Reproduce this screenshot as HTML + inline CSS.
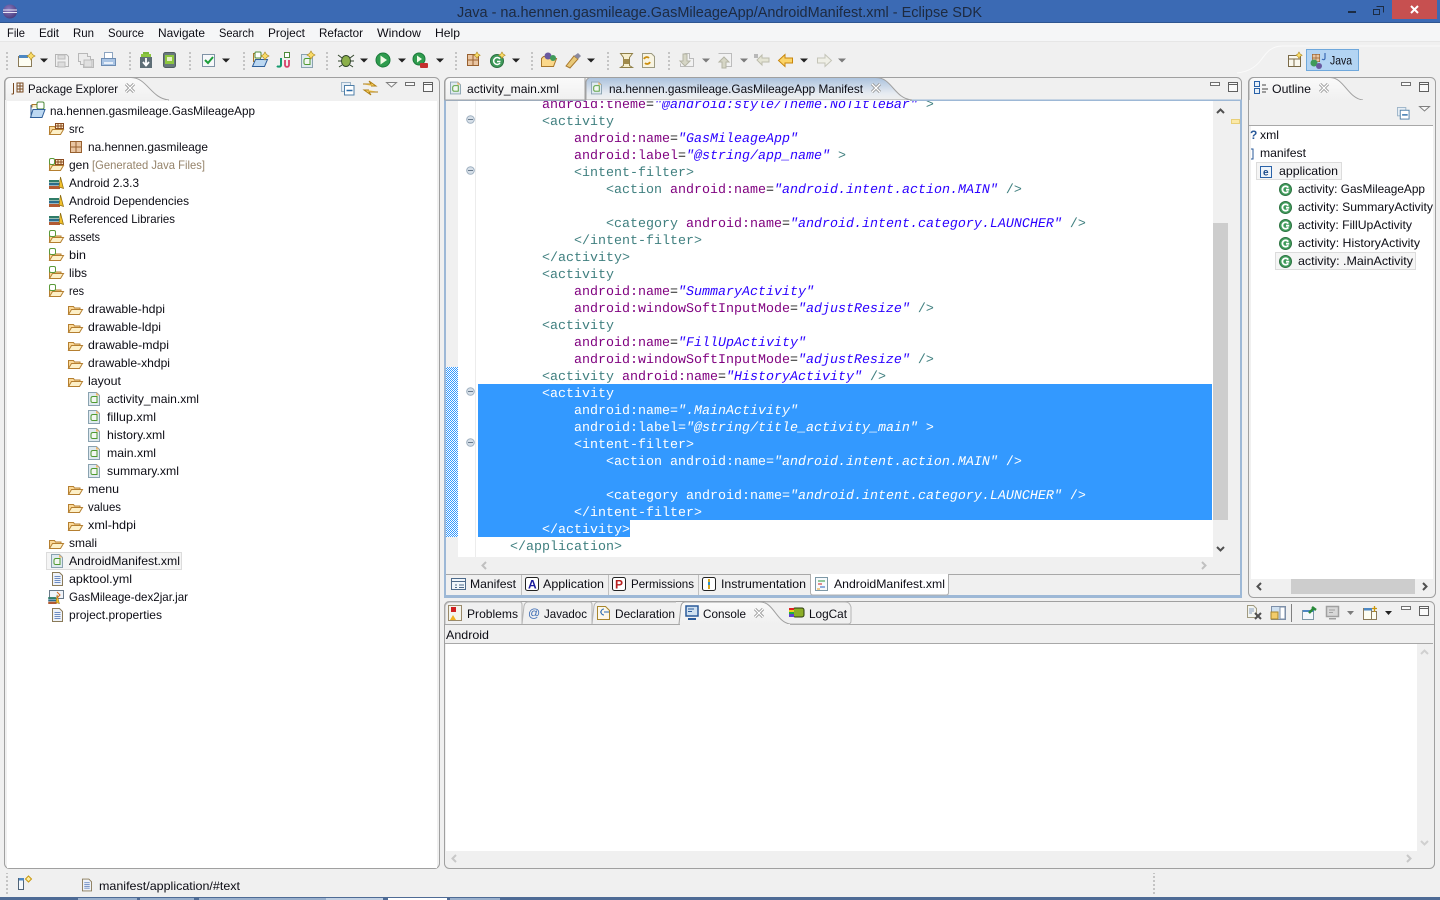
<!DOCTYPE html>
<html><head><meta charset="utf-8"><title>Eclipse SDK</title>
<style>
html,body{margin:0;padding:0;width:1440px;height:900px;overflow:hidden;background:#f0f0f0}
svg{display:block}
text{font-family:"Liberation Sans",sans-serif;font-size:12px;fill:#0c0c14}
.c text,text.c{font-family:"Liberation Mono",monospace;font-size:13.33px;fill:#3f7f7f;white-space:pre;text-rendering:geometricPrecision}
.a{fill:#7f007f}.s{fill:#2a00ff;font-style:italic}
.w text,.w tspan{fill:#fff}
</style></head><body>
<svg width="1440" height="900" viewBox="0 0 1440 900" xmlns="http://www.w3.org/2000/svg">
<defs>
<pattern id="hatch" width="2" height="2" patternUnits="userSpaceOnUse"><rect width="2" height="2" fill="#fff"/><rect width="1" height="1" fill="#3399ff"/><rect x="1" y="1" width="1" height="1" fill="#3399ff"/></pattern>
<pattern id="grip" width="2" height="4" patternUnits="userSpaceOnUse"><rect width="2" height="2" fill="#c4c4c4"/></pattern>
<linearGradient id="act" x1="0" y1="0" x2="0" y2="1"><stop offset="0" stop-color="#a9c1dc"/><stop offset=".7" stop-color="#e6ebf1"/><stop offset="1" stop-color="#f0f0f0"/></linearGradient>
<linearGradient id="inact" x1="0" y1="0" x2="0" y2="1"><stop offset="0" stop-color="#fafafa"/><stop offset="1" stop-color="#f0f0f0"/></linearGradient>
<clipPath id="ed"><rect x="446" y="101" width="767" height="456"/></clipPath>
<symbol id="fold" viewBox="0 0 15 10" overflow="visible"><path d="M.5 9V1.500h5l1 1.500h5.500v2" fill="#fbd998" stroke="#b57f30"/><path d="M.5 9.500l3-5h11l-3 5z" fill="#fdf0c8" stroke="#b57f30"/></symbol>
<symbol id="gfold" viewBox="0 0 15 13" overflow="visible"><g transform="translate(0,3)"><path d="M.5 9V1.500h5l1 1.500h5.500v2" fill="#fbd998" stroke="#b57f30"/><path d="M.5 9.500l3-5h11l-3 5z" fill="#fdf0c8" stroke="#b57f30"/></g><rect x=".5" y=".5" width="6" height="6" rx="1.500" fill="#fff" stroke="#5a9a3a"/></symbol>
<symbol id="sfold" viewBox="0 0 15 12" overflow="visible"><g transform="translate(0,2)"><path d="M.5 9V1.500h5l1 1.500h5.500v2" fill="#fbd998" stroke="#b57f30"/><path d="M.5 9.500l3-5h11l-3 5z" fill="#fdf0c8" stroke="#b57f30"/></g><path d="M6.500.5h8v5h-8zM9 .5v5M12 .5v5M6.500 3h8" fill="#fbe8c4" stroke="#8a4b20"/></symbol>
<symbol id="xml" viewBox="0 0 12 14" overflow="visible"><path d="M.5.5h8l3 3v10H.5z" fill="#dfeaf0" stroke="#8aa2b0"/><path d="M8 .5l3.500 3H8z" fill="#f0b870"/><path d="M9 4.500H5C3.800 4.500 3 5.300 3 6.500V9C3 10 3.800 10.500 5 10.500H9z" fill="#f2f7f2" stroke="#4f9a2f"/></symbol>
<symbol id="doc" viewBox="0 0 11 14" overflow="visible"><path d="M.5.5h7l3 3v10H.5z" fill="#eef2f8" stroke="#8a7a58"/><path d="M2.500 4.500h6M2.500 6.500h6M2.500 8.500h6M2.500 10.500h6" stroke="#6d8cc2"/></symbol>
<symbol id="lib" viewBox="0 0 15 13" overflow="visible"><path d="M0 4h10v2.500H0z" fill="#2f7c68"/><path d="M0 7h11v2.500H0z" fill="#2a6c8c"/><path d="M0 10h11v3H0z" fill="#b25a33"/><path d="M10 11L11.500 1l3 11.500z" fill="#f2c02a" stroke="#8a6a10" stroke-width=".7"/></symbol>
<symbol id="pkg" viewBox="0 0 12 12" overflow="visible"><rect x=".5" y=".5" width="11" height="11" fill="#e9c5a2" stroke="#97602f"/><path d="M6 0v12M0 6h12" stroke="#97602f"/></symbol>
<symbol id="G" viewBox="0 0 14 14" overflow="visible"><circle cx="7" cy="7" r="6.500" fill="#3f9a5a" stroke="#2c7040"/><path d="M10 5A3.500 3.500 0 1 0 10 9M7.500 7.200H11" fill="none" stroke="#fff" stroke-width="2"/></symbol>
<symbol id="min" viewBox="0 0 28 10" overflow="visible"><rect x=".5" y=".5" width="9" height="3" fill="#fafafa" stroke="#707070"/><rect x="18.500" y=".5" width="9" height="9" fill="#fafafa" stroke="#606060"/><path d="M18.500 2.500h9" stroke="#606060"/></symbol>
<symbol id="coll" viewBox="0 0 14 14" overflow="visible"><rect x=".5" y=".5" width="9" height="9" fill="#e6eef5" stroke="#9db4c8"/><rect x="3.500" y="3.500" width="9.500" height="9.500" fill="#fff" stroke="#4f7fa8"/><path d="M5.500 8.500h6" stroke="#2a6ca8" stroke-width="1.500"/></symbol>
<symbol id="x" viewBox="0 0 10 10" overflow="visible"><path d="M1 1l8 8M9 1L1 9" stroke="#8e8e8e" stroke-width="3"/><path d="M1 1l8 8M9 1L1 9" stroke="#fff" stroke-width="1.300"/></symbol>
<radialGradient id="ecl" cx=".4" cy=".35" r=".8"><stop offset="0" stop-color="#8a7ac0"/><stop offset="1" stop-color="#3f3272"/></radialGradient>
</defs>

<!-- window chrome -->
<rect width="1440" height="900" fill="#f0f0f0"/>
<rect width="1440" height="22" fill="#3b6ab4"/><rect y="22" width="1440" height="1" fill="#2e5590"/>
<rect y="23" width="1440" height="18" fill="#f5f6f7"/><rect y="41" width="1440" height="1" fill="#e6e6e6"/>
<circle cx="10" cy="11.500" r="7" fill="url(#ecl)"/><path d="M3 10h14M3 12.500h14" stroke="#e8e6f6" stroke-width="1"/>
<text x="457" y="17" style="font-size:15px;fill:#1d2a40" textLength="525" lengthAdjust="spacingAndGlyphs">Java - na.hennen.gasmileage.GasMileageApp/AndroidManifest.xml - Eclipse SDK</text>
<rect x="1348" y="11" width="8" height="2" fill="#1c2c44"/>
<path d="M1376.500 6.500h7v6" fill="none" stroke="#1c2c44"/>
<path d="M1373.500 9.500h6v5h-6z" fill="#3b6ab4" stroke="#1c2c44"/>
<rect x="1392" y="0" width="45" height="19" fill="#c75050"/>
<path d="M1411 6l7 7M1418 6l-7 7" stroke="#fff" stroke-width="2"/>
<g>
<text x="7" y="37" textLength="18" lengthAdjust="spacingAndGlyphs">File</text>
<text x="39" y="37" textLength="20" lengthAdjust="spacingAndGlyphs">Edit</text>
<text x="73" y="37" textLength="21" lengthAdjust="spacingAndGlyphs">Run</text>
<text x="108" y="37" textLength="36" lengthAdjust="spacingAndGlyphs">Source</text>
<text x="158" y="37" textLength="47" lengthAdjust="spacingAndGlyphs">Navigate</text>
<text x="219" y="37" textLength="35" lengthAdjust="spacingAndGlyphs">Search</text>
<text x="268" y="37" textLength="37" lengthAdjust="spacingAndGlyphs">Project</text>
<text x="319" y="37" textLength="44" lengthAdjust="spacingAndGlyphs">Refactor</text>
<text x="377" y="37" textLength="44" lengthAdjust="spacingAndGlyphs">Window</text>
<text x="435" y="37" textLength="25" lengthAdjust="spacingAndGlyphs">Help</text>
</g>

<!-- toolbar grips -->
<g fill="url(#grip)">
<rect x="6" y="50" width="2" height="22"/><rect x="129" y="50" width="2" height="22"/><rect x="189" y="50" width="2" height="22"/><rect x="243" y="50" width="2" height="22"/><rect x="326" y="50" width="2" height="22"/><rect x="455" y="50" width="2" height="22"/><rect x="531" y="50" width="2" height="22"/><rect x="607" y="50" width="2" height="22"/><rect x="668" y="50" width="2" height="22"/>
</g>
<!-- toolbar icons -->
<path d="M18.500 56.500h13v10h-13z" fill="#fdfdf2" stroke="#8a7a58"/><rect x="19" y="55" width="9" height="3" fill="#4d88c4"/><path d="M31 52l1.500 2.500L35 56l-2.500 1.500L31 60l-1.500-2.500L27 56l2.500-1.500z" fill="#f9dc6a" stroke="#b08a20" stroke-width=".7"/>
<path d="M40 58.500h8l-4 4z" fill="#222"/>
<path d="M55.500 54.500h11l2 2v10h-13z" fill="#f0f0f0" stroke="#b4b4b4"/><rect x="58" y="55" width="7" height="4" fill="#ddd" stroke="#bbb"/><rect x="58" y="62" width="7" height="5" fill="#ddd" stroke="#bbb"/>
<path d="M78.500 53.500h9v3h3v3h3v8h-10v-3h-3v-3h-2z" fill="#ececec" stroke="#b8b8b8"/><rect x="84" y="60" width="8" height="7" fill="#e0e0e0" stroke="#bbb"/>
<path d="M104.500 52.500h8v6h-8z" fill="#fff" stroke="#8ca4c0"/><path d="M101.500 58.500h14v7h-14z" fill="#a9c4e4" stroke="#6d8cb2"/><rect x="104" y="62" width="9" height="2" fill="#e8f0fa"/>
<path d="M143 52h6v2h-6z" fill="#7ab83a"/><path d="M141 54h10v3h-10z" fill="#8cc63f"/><rect x="140" y="57" width="12" height="11" fill="#5e6e76"/><path d="M146 58v6M143 62l3 3.500 3-3.500" stroke="#fff" stroke-width="1.800" fill="none"/>
<rect x="163.500" y="52.500" width="12" height="15" rx="2" fill="#68787c" stroke="#4f5c60"/><rect x="165" y="55" width="9" height="9" fill="#8cc63f"/><path d="M167 57h5v4h-5z" fill="#e6f0c8"/>
<rect x="202.500" y="54.500" width="12" height="12" fill="#f6f8fa" stroke="#7f93a6"/><path d="M205 60l3 3 5-6" stroke="#1d9e3a" stroke-width="2" fill="none"/>
<path d="M222 58.500h8l-4 4z" fill="#222"/>
<path d="M253.500 53.500h7v8h-7z" fill="#fbeec8" stroke="#a8772c"/><rect x="255" y="52" width="6" height="6" rx="1" fill="#fff" stroke="#4d8a3a"/><path d="M252.500 66.500l3-7h12l-3 7z" fill="#bcd8f2" stroke="#2f5f9a"/><path d="M265 52l1.500 2.500 2.500 1.500-2.500 1.500-1.500 2.500-1.500-2.500-2.500-1.500 2.500-1.500z" fill="#f9dc6a" stroke="#b08a20" stroke-width=".7"/>
<path d="M281 58v7c0 2-3 2-4 1" stroke="#159a6e" stroke-width="2" fill="none"/><path d="M285 60v5c0 2.500 4 2.500 4 0v-5" stroke="#d8406a" stroke-width="1.800" fill="none"/><rect x="284.500" y="52.500" width="5" height="5" fill="#fff" stroke="#4d8a3a"/>
<use href="#xml" x="301" y="54" width="12" height="14"/><path d="M311 51l1.500 2.500 2.500 1.500-2.500 1.500-1.500 2.500-1.500-2.500-2.500-1.500 2.500-1.500z" fill="#f9dc6a" stroke="#b08a20" stroke-width=".7"/>
<ellipse cx="346" cy="61" rx="4.500" ry="5.500" fill="#8cb04a" stroke="#31452a"/><path d="M338 55l4 3M354 55l-4 3M338 61h4M354 61h-4M339 67l3-2M353 67l-3-2" stroke="#31452a"/>
<path d="M360 58.500h8l-4 4z" fill="#222"/>
<circle cx="383" cy="60" r="7" fill="#2f9c4e" stroke="#1b7a3a"/><path d="M380.500 55.500l6.500 4.500-6.500 4.500z" fill="#f0fbe6"/>
<path d="M398 58.500h8l-4 4z" fill="#222"/>
<circle cx="419" cy="59" r="6" fill="#2f9c4e" stroke="#1b7a3a"/><path d="M417 55.500l5 3.500-5 3.500z" fill="#f0fbe6"/><rect x="420" y="63" width="8" height="5" rx="1" fill="#c42f2f"/>
<path d="M436 58.500h8l-4 4z" fill="#222"/>
<use href="#pkg" x="467" y="54" width="12" height="12"/><path d="M477 52l1.200 2 2 1.200-2 1.200-1.200 2-1.200-2-2-1.200 2-1.200z" fill="#f9dc6a" stroke="#b08a20" stroke-width=".6"/>
<circle cx="497" cy="61" r="6.500" fill="#3f9a5a" stroke="#2c7040"/><path d="M500 59a3.500 3.500 0 1 0 0 4M497 61.500h3.500" fill="none" stroke="#fff" stroke-width="1.500"/><path d="M502 52l1.200 2 2 1.200-2 1.200-1.200 2-1.200-2-2-1.200 2-1.200z" fill="#f9dc6a" stroke="#b08a20" stroke-width=".6"/>
<path d="M512 58.500h8l-4 4z" fill="#222"/>
<path d="M541.500 66.500v-8l2-2h5v2h8l-3 8z" fill="#fbd88a" stroke="#a8772c"/><circle cx="548" cy="56" r="3.500" fill="#6a5aa0"/><circle cx="553" cy="58" r="3" fill="#3f9a5a"/>
<path d="M566 66l8-10 4 3-8 9z" fill="#e8c878" stroke="#a8772c"/><path d="M574 56l4-3 3 3-3 3z" fill="#8a8aa0"/>
<path d="M587 58.500h8l-4 4z" fill="#222"/>
<path d="M620.500 53.500h12l-3 4v8l3 2h-12l3-2v-8z" fill="#f6eecc" stroke="#8f7f48"/><rect x="623" y="59" width="6" height="5" fill="#a08a4a"/>
<path d="M642.500 53.500h9l3 3v11h-12z" fill="#f8f4e2" stroke="#9c9a80"/><path d="M644 59a3 3 0 0 1 5-1M650 62a3 3 0 0 1-5 1" stroke="#cc8f10" fill="none" stroke-width="1.800"/>
<path d="M684.500 53.500h5v5h4v8h-13v-3" fill="#f2f2f2" stroke="#bcbcbc"/><path d="M683 54v7h-3l5 5 5-5h-3v-7z" fill="#d6d6c6" stroke="#b4b4a4"/>
<path d="M702 58.500h8l-4 4z" fill="#7c7c7c"/>
<path d="M718.500 53.500h13v13h-5" fill="#f2f2f2" stroke="#bcbcbc"/><path d="M724 57l5 5h-3v6h-4v-6h-3z" fill="#d6d6c6" stroke="#b4b4a4"/>
<path d="M740 58.500h8l-4 4z" fill="#7c7c7c"/>
<path d="M762 55l-5 5 5 5v-3h7v-4h-7z" fill="#e4e4d4" stroke="#bcbcac"/><rect x="754" y="54" width="4" height="4" fill="#b8b8b8"/>
<path d="M785 54.500l-6.500 6 6.500 6v-3.500h7.500v-5H785z" fill="#fbd468" stroke="#c8860c" stroke-width="1"/>
<path d="M800 58.500h8l-4 4z" fill="#222"/>
<path d="M825 54.500l6.500 6-6.500 6v-3.500h-7.500v-5H825z" fill="#efefe6" stroke="#c4c4b8"/>
<path d="M838 58.500h8l-4 4z" fill="#7c7c7c"/>

<!-- perspective area -->
<path d="M1237 73c10-1 18-5 24-13 6-8 10-14 22-14H1440" fill="none" stroke="#fafafa" stroke-width="1"/>
<rect x="1288.500" y="55.500" width="12" height="11" fill="#faf8ee" stroke="#7a6a48"/><path d="M1288 59h12M1294 59v8" stroke="#7a6a48"/><path d="M1299 52l1.200 2 2 1.200-2 1.200-1.200 2-1.200-2-2-1.200 2-1.200z" fill="#f9dc6a" stroke="#b08a20" stroke-width=".6"/>
<rect x="1306.500" y="49.500" width="52" height="21" fill="#b3d4f3" stroke="#6fa8dc"/>
<use href="#pkg" x="1312" y="54" width="8" height="8"/><circle cx="1314" cy="63" r="3.500" fill="#3f9a5a"/><circle cx="1319" cy="66" r="3" fill="#6a5aa0"/><path d="M1325 53v5c0 2-2 2-3 1" stroke="#3a6ab4" fill="none" stroke-width="1.200"/>
<text x="1330" y="64.500" textLength="22" lengthAdjust="spacingAndGlyphs">Java</text>

<!-- Package Explorer panel -->
<rect x="4.500" y="77.500" width="435" height="791" rx="5" fill="#f0f0f0" stroke="#a0a0a0"/>
<rect x="7" y="101" width="430" height="767" fill="#fff"/>
<path d="M5 100.500V82a5 5 0 0 1 5-4.500h121c16 0 20 21 38 22.500" fill="url(#inact)" stroke="#a0a0a0"/>
<path d="M5 100h163V101H5z" fill="#f0f0f0"/>
<path d="M13.500 83v11M13.500 94h-2M17 83h6v3h-6zM17 86h6v3h-6zM17 89h6v3h-6zM20 83v9" stroke="#7a4a20" fill="none"/>
<text x="28" y="93" textLength="90" lengthAdjust="spacingAndGlyphs">Package Explorer</text>
<use href="#x" x="125" y="83" width="10" height="10"/>
<use href="#coll" x="341" y="82" width="14" height="14"/>
<path d="M363 84h8l-2-3 7 5-5 0M378 92h-9l2 3-7-5 5 0" fill="#fbd468" stroke="#b08016"/>
<path d="M386.500 82.500h10l-5 4.500z" fill="#f8f8f8" stroke="#808080"/>
<use href="#min" x="405" y="82" width="28" height="10"/>

<!-- tree -->
<path d="M32 107.500v-3h8v3" fill="#fbeec8" stroke="#a8772c"/><rect x="37" y="102" width="7" height="7" rx="1.500" fill="#fff" stroke="#4d8a3a"/><path d="M30.500 117.500l2.500-8h12l-3 8z" fill="#bcd8f2" stroke="#2f5f9a"/><path d="M31 117v-12" stroke="#2f5f9a"/>
<g>
<text x="50" y="115" textLength="205" lengthAdjust="spacingAndGlyphs">na.hennen.gasmileage.GasMileageApp</text>
<text x="69" y="133" textLength="15" lengthAdjust="spacingAndGlyphs">src</text>
<text x="88" y="151" textLength="120" lengthAdjust="spacingAndGlyphs">na.hennen.gasmileage</text>
<text x="69" y="169" textLength="20" lengthAdjust="spacingAndGlyphs">gen</text>
<text x="92" y="169" textLength="113" lengthAdjust="spacingAndGlyphs" style="fill:#95836a">[Generated Java Files]</text>
<text x="69" y="187" textLength="70" lengthAdjust="spacingAndGlyphs">Android 2.3.3</text>
<text x="69" y="205" textLength="120" lengthAdjust="spacingAndGlyphs">Android Dependencies</text>
<text x="69" y="223" textLength="106" lengthAdjust="spacingAndGlyphs">Referenced Libraries</text>
<text x="69" y="241" textLength="31" lengthAdjust="spacingAndGlyphs">assets</text>
<text x="69" y="259" textLength="17" lengthAdjust="spacingAndGlyphs">bin</text>
<text x="69" y="277" textLength="18" lengthAdjust="spacingAndGlyphs">libs</text>
<text x="69" y="295" textLength="15" lengthAdjust="spacingAndGlyphs">res</text>
<text x="88" y="313" textLength="77" lengthAdjust="spacingAndGlyphs">drawable-hdpi</text>
<text x="88" y="331" textLength="73" lengthAdjust="spacingAndGlyphs">drawable-ldpi</text>
<text x="88" y="349" textLength="81" lengthAdjust="spacingAndGlyphs">drawable-mdpi</text>
<text x="88" y="367" textLength="82" lengthAdjust="spacingAndGlyphs">drawable-xhdpi</text>
<text x="88" y="385" textLength="33" lengthAdjust="spacingAndGlyphs">layout</text>
<text x="107" y="403" textLength="92" lengthAdjust="spacingAndGlyphs">activity_main.xml</text>
<text x="107" y="421" textLength="49" lengthAdjust="spacingAndGlyphs">fillup.xml</text>
<text x="107" y="439" textLength="58" lengthAdjust="spacingAndGlyphs">history.xml</text>
<text x="107" y="457" textLength="49" lengthAdjust="spacingAndGlyphs">main.xml</text>
<text x="107" y="475" textLength="72" lengthAdjust="spacingAndGlyphs">summary.xml</text>
<text x="88" y="493" textLength="31" lengthAdjust="spacingAndGlyphs">menu</text>
<text x="88" y="511" textLength="33" lengthAdjust="spacingAndGlyphs">values</text>
<text x="88" y="529" textLength="48" lengthAdjust="spacingAndGlyphs">xml-hdpi</text>
<text x="69" y="547" textLength="28" lengthAdjust="spacingAndGlyphs">smali</text>
<rect x="46.500" y="552.500" width="135" height="17" fill="#f5f5f5" stroke="#dcdcdc"/>
<text x="69" y="565" textLength="111" lengthAdjust="spacingAndGlyphs">AndroidManifest.xml</text>
<text x="69" y="583" textLength="63" lengthAdjust="spacingAndGlyphs">apktool.yml</text>
<text x="69" y="601" textLength="119" lengthAdjust="spacingAndGlyphs">GasMileage-dex2jar.jar</text>
<text x="69" y="619" textLength="93" lengthAdjust="spacingAndGlyphs">project.properties</text>
</g>
<use href="#sfold" x="49" y="123" width="15" height="12"/>
<use href="#pkg" x="70" y="141" width="12" height="12"/>
<use href="#sfold" x="49" y="159" width="15" height="12"/><rect x="49.500" y="158.500" width="5" height="6" rx="1.500" fill="#fff" stroke="#5a9a3a"/>
<use href="#lib" x="49" y="176" width="15" height="13"/><use href="#lib" x="49" y="194" width="15" height="13"/><use href="#lib" x="49" y="212" width="15" height="13"/>
<use href="#gfold" x="49" y="230" width="15" height="13"/><use href="#gfold" x="49" y="248" width="15" height="13"/><use href="#gfold" x="49" y="266" width="15" height="13"/><use href="#gfold" x="49" y="284" width="15" height="13"/>
<use href="#fold" x="68" y="305" width="15" height="10"/><use href="#fold" x="68" y="323" width="15" height="10"/><use href="#fold" x="68" y="341" width="15" height="10"/><use href="#fold" x="68" y="359" width="15" height="10"/><use href="#fold" x="68" y="377" width="15" height="10"/>
<use href="#xml" x="88" y="392" width="12" height="14"/><use href="#xml" x="88" y="410" width="12" height="14"/><use href="#xml" x="88" y="428" width="12" height="14"/><use href="#xml" x="88" y="446" width="12" height="14"/><use href="#xml" x="88" y="464" width="12" height="14"/>
<use href="#fold" x="68" y="485" width="15" height="10"/><use href="#fold" x="68" y="503" width="15" height="10"/><use href="#fold" x="68" y="521" width="15" height="10"/><use href="#fold" x="49" y="539" width="15" height="10"/>
<use href="#xml" x="51" y="554" width="12" height="14"/>
<use href="#doc" x="52" y="572" width="11" height="14"/>
<path d="M49.500 590.500h10l4 0v8h-14z" fill="#f0f4fa" stroke="#6a7a8a"/><use href="#lib" x="48" y="594" width="12" height="10"/><path d="M57 592l3 3-3 3" stroke="#d8681a" fill="none"/>
<use href="#doc" x="52" y="608" width="11" height="14"/>

<!-- Editor panel -->
<rect x="444.500" y="77.500" width="797" height="520" rx="5" fill="#f0f0f0" stroke="#a0a0a0"/>
<rect x="444" y="100" width="2" height="498" fill="#9db8d6"/><rect x="1240" y="100" width="2" height="498" fill="#9db8d6"/><rect x="444" y="595" width="798" height="3" fill="#9db8d6"/>
<rect x="444" y="99.500" width="798" height="1.500" fill="#9db8d6"/>
<path d="M445 100V82a5 5 0 0 1 5-4.500h135V100z" fill="url(#inact)" stroke="#a0a0a0"/>
<path d="M586 100V83a5 5 0 0 1 6-5.500h284c16 0 18 21 36 22.500H586z" fill="url(#act)" stroke="#a0a0a0"/>
<path d="M586 100h324v1H586z" fill="#f6f8fb"/>
<use href="#xml" x="450" y="81" width="11" height="14"/>
<text x="467" y="93" textLength="92" lengthAdjust="spacingAndGlyphs">activity_main.xml</text>
<use href="#xml" x="591" y="81" width="11" height="14"/>
<text x="609" y="93" textLength="254" lengthAdjust="spacingAndGlyphs">na.hennen.gasmileage.GasMileageApp Manifest</text>
<use href="#x" x="871" y="83" width="10" height="10"/>
<use href="#min" x="1210" y="82" width="28" height="10"/>

<rect x="446" y="101" width="767" height="456" fill="#fff"/>
<rect x="446" y="101" width="12" height="456" fill="#f0f0f0"/>
<rect x="475" y="101" width="1" height="456" fill="#ececec"/>
<rect x="446" y="367" width="12" height="170" fill="url(#hatch)"/>
<g fill="#d6dfe8" stroke="#9fb0c0"><circle cx="470.500" cy="119.500" r="3.800"/><circle cx="470.500" cy="170.500" r="3.800"/><circle cx="470.500" cy="391.500" r="3.800"/><circle cx="470.500" cy="442.500" r="3.800"/></g>
<path d="M468 119.500h5M468 170.500h5M468 391.500h5M468 442.500h5" stroke="#687a8c"/>
<rect x="478" y="384" width="734" height="136" fill="#3399ff"/><rect x="478" y="520" width="152" height="17" fill="#3399ff"/>
<g class="c" clip-path="url(#ed)">
<text x="542" y="108"><tspan class="a">android:theme</tspan><tspan style="fill:#222">=</tspan><tspan class="s">"@android:style/Theme.NoTitleBar"</tspan> &gt;</text>
<text x="542" y="125">&lt;activity</text>
<text x="574" y="142"><tspan class="a">android:name</tspan><tspan style="fill:#222">=</tspan><tspan class="s">"GasMileageApp"</tspan></text>
<text x="574" y="159"><tspan class="a">android:label</tspan><tspan style="fill:#222">=</tspan><tspan class="s">"@string/app_name"</tspan> &gt;</text>
<text x="574" y="176">&lt;intent-filter&gt;</text>
<text x="606" y="193">&lt;action <tspan class="a">android:name</tspan><tspan style="fill:#222">=</tspan><tspan class="s">"android.intent.action.MAIN"</tspan> /&gt;</text>
<text x="606" y="227">&lt;category <tspan class="a">android:name</tspan><tspan style="fill:#222">=</tspan><tspan class="s">"android.intent.category.LAUNCHER"</tspan> /&gt;</text>
<text x="574" y="244">&lt;/intent-filter&gt;</text>
<text x="542" y="261">&lt;/activity&gt;</text>
<text x="542" y="278">&lt;activity</text>
<text x="574" y="295"><tspan class="a">android:name</tspan><tspan style="fill:#222">=</tspan><tspan class="s">"SummaryActivity"</tspan></text>
<text x="574" y="312"><tspan class="a">android:windowSoftInputMode</tspan><tspan style="fill:#222">=</tspan><tspan class="s">"adjustResize"</tspan> /&gt;</text>
<text x="542" y="329">&lt;activity</text>
<text x="574" y="346"><tspan class="a">android:name</tspan><tspan style="fill:#222">=</tspan><tspan class="s">"FillUpActivity"</tspan></text>
<text x="574" y="363"><tspan class="a">android:windowSoftInputMode</tspan><tspan style="fill:#222">=</tspan><tspan class="s">"adjustResize"</tspan> /&gt;</text>
<text x="542" y="380">&lt;activity <tspan class="a">android:name</tspan><tspan style="fill:#222">=</tspan><tspan class="s">"HistoryActivity"</tspan> /&gt;</text>
<text x="510" y="550">&lt;/application&gt;</text>
</g>
<g class="c w">
<text x="542" y="397">&lt;activity</text>
<text x="574" y="414">android:name=<tspan font-style="italic">".MainActivity"</tspan></text>
<text x="574" y="431">android:label=<tspan font-style="italic">"@string/title_activity_main"</tspan> &gt;</text>
<text x="574" y="448">&lt;intent-filter&gt;</text>
<text x="606" y="465">&lt;action android:name=<tspan font-style="italic">"android.intent.action.MAIN"</tspan> /&gt;</text>
<text x="606" y="499">&lt;category android:name=<tspan font-style="italic">"android.intent.category.LAUNCHER"</tspan> /&gt;</text>
<text x="574" y="516">&lt;/intent-filter&gt;</text>
<text x="542" y="533">&lt;/activity&gt;</text>
</g>
<!-- editor scrollbars -->
<rect x="1213" y="101" width="15" height="456" fill="#f0f0f0"/>
<rect x="1213" y="223" width="15" height="297" fill="#cdcdcd"/>
<path d="M1217 113l3.500-3.500 3.500 3.500M1217 547l3.500 3.500 3.500-3.500" fill="none" stroke="#505050" stroke-width="2"/>
<rect x="1231.500" y="119.500" width="8" height="4" fill="#fbe9a8" stroke="#e8cf78"/>
<path d="M486 562l-3.500 3.500 3.500 3.500M1202 562l3.500 3.500-3.500 3.500" fill="none" stroke="#c0c0c0" stroke-width="2"/>
<!-- form tabs -->
<rect x="446" y="574" width="794" height="1" fill="#a8a8a8"/>
<path d="M521.500 575v20M608.500 575v20M698.500 575v20" stroke="#c0c0c0"/>
<path d="M810.500 574.500v18q0 2.500 2.500 2.500h133q2.500 0 2.500-2.500v-18" fill="#fff" stroke="#b0b0b0"/>
<rect x="811" y="574" width="137" height="2" fill="#fff"/>
<rect x="451.500" y="578.500" width="14" height="11" fill="#f0f6fb" stroke="#4d6a8a"/><path d="M451 581.500h14M455 585h2M459 585h5M455 587.500h2M459 587.500h5" stroke="#4d6a8a"/>
<text x="470" y="588" textLength="46" lengthAdjust="spacingAndGlyphs">Manifest</text>
<rect x="525.500" y="577.500" width="13" height="13" rx="2" fill="#fff" stroke="#222"/><text x="528" y="588.500" style="font-size:12px;font-weight:bold;fill:#1a1a9c">A</text>
<text x="543" y="588" textLength="61" lengthAdjust="spacingAndGlyphs">Application</text>
<rect x="612.500" y="577.500" width="13" height="13" rx="2" fill="#fff" stroke="#222"/><text x="615" y="588.500" style="font-size:12px;font-weight:bold;fill:#b82020">P</text>
<text x="631" y="588" textLength="63" lengthAdjust="spacingAndGlyphs">Permissions</text>
<rect x="702.500" y="577.500" width="13" height="13" rx="2" fill="#fff" stroke="#222"/><rect x="708" y="579" width="2" height="3" fill="#d8a820"/><rect x="708" y="582" width="2" height="3" fill="#2a8fc8"/><rect x="708" y="585" width="2" height="4" fill="#d8a820"/>
<text x="721" y="588" textLength="85" lengthAdjust="spacingAndGlyphs">Instrumentation</text>
<rect x="815.500" y="577.500" width="12" height="13" fill="#f6fafc" stroke="#7d98a6"/><path d="M818 581h7" stroke="#2a9a3a"/><path d="M818 584h4" stroke="#d02020"/><path d="M820 587h5" stroke="#2a62c0"/><path d="M817 589h3" stroke="#e8a020"/>
<text x="834" y="588" textLength="111" lengthAdjust="spacingAndGlyphs">AndroidManifest.xml</text>

<!-- Outline panel -->
<rect x="1248.500" y="77.500" width="187" height="520" rx="5" fill="#f0f0f0" stroke="#a0a0a0"/>
<path d="M1249 100V82a5 5 0 0 1 5-4.500h76c14 0 18 21 33 22.500" fill="url(#inact)" stroke="#a0a0a0"/>
<rect x="1249" y="100" width="114" height="1" fill="#f0f0f0"/>
<rect x="1254.500" y="81.500" width="5" height="5" fill="#e8f0f8" stroke="#2a62a8"/><rect x="1254.500" y="88.500" width="5" height="5" fill="#e8f0f8" stroke="#2a62a8"/><path d="M1262 85h4M1262 89h6M1262 92h4" stroke="#444"/>
<text x="1272" y="93" textLength="39" lengthAdjust="spacingAndGlyphs">Outline</text>
<use href="#x" x="1319" y="83" width="10" height="10"/>
<use href="#min" x="1401" y="82" width="28" height="10"/>
<use href="#coll" x="1397" y="107" width="13" height="13"/>
<path d="M1419.500 106.500h10l-5 4.500z" fill="#f8f8f8" stroke="#808080"/>
<rect x="1249" y="125" width="184" height="1" fill="#a8a8a8"/>
<rect x="1251" y="126" width="182" height="453" fill="#fff"/>
<text x="1250" y="139" style="font-size:12px;font-weight:bold;fill:#2a5a9a">?</text>
<text x="1260" y="139" textLength="19" lengthAdjust="spacingAndGlyphs">xml</text>
<path d="M1251 149h2v10h-2" stroke="#2a5a9a" fill="none"/>
<text x="1260" y="157" textLength="46" lengthAdjust="spacingAndGlyphs">manifest</text>
<rect x="1256.500" y="162.500" width="85" height="17" fill="#f5f5f5" stroke="#dcdcdc"/>
<rect x="1260.500" y="166.500" width="11" height="11" fill="#eef4fa" stroke="#2a62a8"/><text x="1263" y="175.500" style="font-size:10px;font-weight:bold;fill:#1a4a8a">e</text>
<text x="1279" y="175" textLength="59" lengthAdjust="spacingAndGlyphs">application</text>
<use href="#G" x="1279" y="183" width="13" height="13"/><text x="1298" y="193" textLength="127" lengthAdjust="spacingAndGlyphs">activity: GasMileageApp</text>
<use href="#G" x="1279" y="201" width="13" height="13"/><text x="1298" y="211" textLength="135" lengthAdjust="spacingAndGlyphs">activity: SummaryActivity</text>
<use href="#G" x="1279" y="219" width="13" height="13"/><text x="1298" y="229" textLength="114" lengthAdjust="spacingAndGlyphs">activity: FillUpActivity</text>
<use href="#G" x="1279" y="237" width="13" height="13"/><text x="1298" y="247" textLength="122" lengthAdjust="spacingAndGlyphs">activity: HistoryActivity</text>
<rect x="1275.500" y="252.500" width="140" height="17" fill="#f5f5f5" stroke="#dcdcdc"/>
<use href="#G" x="1279" y="255" width="13" height="13"/><text x="1298" y="265" textLength="115" lengthAdjust="spacingAndGlyphs">activity: .MainActivity</text>
<rect x="1291" y="579" width="124" height="15" fill="#cdcdcd"/>
<path d="M1261 583l-3.500 3.500 3.500 3.500M1423 583l3.500 3.500-3.500 3.500" fill="none" stroke="#505050" stroke-width="2"/>

<!-- Console panel -->
<rect x="444.500" y="601.500" width="990" height="267" rx="5" fill="#f0f0f0" stroke="#a0a0a0"/>
<rect x="445" y="624" width="989" height="1" fill="#a8a8a8"/>
<rect x="445" y="643" width="988" height="1" fill="#a8a8a8"/>
<rect x="446" y="644" width="971" height="207" fill="#fff"/>
<path d="M445 624V607a5 5 0 0 1 5-5h70q2 0 2 3v19M522 624l2-18q1-4 4-4h62q2 0 2 3v19M592 624l2-18q1-4 4-4h78" fill="#f0f0f0" stroke="#b4b4b4"/>
<path d="M679 624l2-18q1-4 4-4h75c14 0 16 20 30 22" fill="url(#inact)" stroke="#a0a0a0"/>
<path d="M680 624h110v1H680z" fill="#f0f0f0"/>
<path d="M790 624h58q3 0 3-3v-14c-1-3-2-5-6-5h-80" fill="none" stroke="#b4b4b4"/>
<rect x="448.500" y="605.500" width="13" height="15" fill="#f4f4ec" stroke="#9a8a6a"/><rect x="451" y="607" width="5" height="5" fill="#d02020"/><path d="M450 620l3-5 3 5z" fill="#f0b020"/>
<text x="467" y="618" textLength="51" lengthAdjust="spacingAndGlyphs">Problems</text>
<text x="528" y="617" style="font-size:12px;fill:#3a6ab4">@</text>
<text x="544" y="618" textLength="43" lengthAdjust="spacingAndGlyphs">Javadoc</text>
<path d="M597.500 606.500h8l4 4v9h-12z" fill="#fdf8ea" stroke="#a8862c"/><path d="M604 609a3 3 0 0 0-3 3v0h-1 1a3 3 0 0 0 3 3M604 612h5" stroke="#2a6ab4" fill="none"/>
<text x="615" y="618" textLength="60" lengthAdjust="spacingAndGlyphs">Declaration</text>
<rect x="686" y="606" width="12" height="10" fill="#cfe0f0" stroke="#2a5a9a" stroke-width="1.500"/><path d="M688 609h6M688 611.500h4" stroke="#2a5a9a"/><rect x="688" y="618" width="8" height="2" fill="#2a5a9a"/>
<text x="703" y="618" textLength="43" lengthAdjust="spacingAndGlyphs">Console</text>
<use href="#x" x="754" y="608" width="10" height="10"/>
<rect x="793" y="608" width="11" height="9" rx="2" fill="#8cae28" stroke="#2a3a10"/><path d="M789 608h5v2h-5z" fill="#e02020"/><path d="M789 610h5v2h-5z" fill="#f0d020"/><path d="M789 612h5v2h-5z" fill="#20b040"/><path d="M789 614h5v3h-5z" fill="#6040d0"/>
<text x="809" y="618" textLength="38" lengthAdjust="spacingAndGlyphs">LogCat</text>
<text x="446" y="639" textLength="43" lengthAdjust="spacingAndGlyphs">Android</text>
<!-- console toolbar -->
<path d="M1247.500 605.500h6l3 3v9h-9z" fill="#f2f4f0" stroke="#a09a80"/><path d="M1249 609h5M1249 611h5M1249 613h3" stroke="#8aa0c0"/><path d="M1255 613l6 6M1261 613l-6 6" stroke="#505050" stroke-width="2"/>
<rect x="1271.500" y="606.500" width="14" height="13" fill="#cfe0f0" stroke="#7d8fa8"/><rect x="1280" y="607" width="5" height="12" fill="#fff" stroke="#7d8fa8"/><rect x="1271" y="612" width="7" height="7" fill="#f2cc6a" stroke="#a8862c"/>
<rect x="1291" y="604" width="1" height="18" fill="#808080"/>
<rect x="1302.500" y="610.500" width="11" height="9" fill="#f4f8fc" stroke="#7d98a6"/><rect x="1303" y="610" width="11" height="2" fill="#4d88c4"/><path d="M1309 613l5-5M1312 607l4 3" stroke="#2a8a3a" stroke-width="2.500"/>
<rect x="1326.500" y="606.500" width="12" height="10" fill="#d8d8d8" stroke="#a0a0a0" stroke-width="1.500"/><path d="M1329 610h6M1329 612.500h4" stroke="#a0a0a0"/><rect x="1329" y="618" width="7" height="1.500" fill="#a0a0a0"/>
<path d="M1347 611h7l-3.500 4z" fill="#7c7c7c"/>
<path d="M1363.500 608.500h8v11h-8z" fill="#fdfdf2" stroke="#8a7a58"/><path d="M1371.500 611.500h5v8h-5z" fill="#fdfdf2" stroke="#8a7a58"/><rect x="1364" y="608" width="8" height="2.500" fill="#4d88c4"/><path d="M1374.500 606v6M1372 608.500h5" stroke="#c8960c" stroke-width="1.300"/>
<path d="M1385 611h7l-3.500 4z" fill="#222"/>
<use href="#min" x="1401" y="606" width="28" height="10"/>
<path d="M1421 654l3.500-3.500 3.500 3.500M1421 841l3.500 3.500 3.500-3.500" fill="none" stroke="#d0d0d0" stroke-width="2"/>
<path d="M456 855l-3.500 3.500 3.500 3.500M1407 855l3.500 3.500-3.500 3.500" fill="none" stroke="#c8c8c8" stroke-width="2"/>

<!-- status bar -->
<rect x="6" y="873" width="2" height="22" fill="url(#grip)"/>
<rect x="1153" y="873" width="2" height="22" fill="url(#grip)"/>
<rect x="18.500" y="878.500" width="5" height="11" fill="#f4f8fc" stroke="#506478"/><rect x="19" y="878" width="5" height="2.500" fill="#4d88c4"/>
<path d="M28.500 876l3 3-3 3-3-3z" fill="#fbeea8" stroke="#c8960c"/>
<use href="#doc" x="82" y="878" width="10" height="14"/>
<text x="99" y="890" textLength="141" lengthAdjust="spacingAndGlyphs">manifest/application/#text</text>
<rect y="897" width="1440" height="3" fill="#4e6b95"/>
<rect x="78" y="898" width="59" height="2" fill="#9ab0cc"/><rect x="140" y="898" width="54" height="2" fill="#9ab0cc"/><rect x="199" y="898" width="127" height="2" fill="#9ab0cc"/><rect x="326" y="898" width="57" height="2" fill="#c4d2e4"/><rect x="388" y="898" width="59" height="2" fill="#fff"/><rect x="450" y="898" width="50" height="2" fill="#9ab0cc"/>
</svg>
</body></html>
